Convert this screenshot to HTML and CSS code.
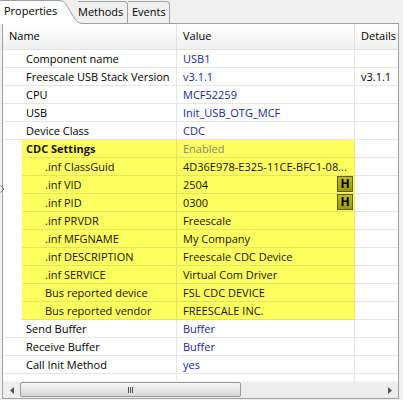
FILE: index.html
```html
<!DOCTYPE html>
<html lang="en">
<head>
    <meta charset="UTF-8">
    <title>Properties</title>
    <link rel="stylesheet" href="styles.css">
</head>
<body>
    <div class="tabs">
        <div class="tab active">Properties</div>
        <svg class="tab-curve" width="22" height="24" viewBox="0 0 22 24">
            <path d="M0 0.5 C9 0.5 12 23.5 22 23.5 L22 24 L0 24 Z" fill="#fff"/>
            <path d="M0 0.5 C9 0.5 12 23.5 22 23.5" fill="none" stroke="#a0a0a0" stroke-width="1"/>
        </svg>
        <div class="tab methods">Methods</div>
        <div class="tab events">Events</div>
    </div>

    <svg class="sash" width="5" height="8" viewBox="0 0 5 8">
        <path d="M0.5 0.5 L4 4 L0.5 7.5" fill="none" stroke="#7a7a7a" stroke-width="1"/>
    </svg>

    <div class="pane">
        <div class="row head">
            <div class="cell c-name">Name</div>
            <div class="cell c-val">Value</div>
            <div class="cell c-det">Details</div>
        </div>

        <div class="rows">
            <div class="row">
                <div class="cell c-name l1">Component name</div>
                <div class="cell c-val blue">USB1</div>
                <div class="cell c-det"></div>
            </div>
            <div class="row">
                <div class="cell c-name l1">Freescale USB Stack Version</div>
                <div class="cell c-val blue">v3.1.1</div>
                <div class="cell c-det">v3.1.1</div>
            </div>
            <div class="row">
                <div class="cell c-name l1">CPU</div>
                <div class="cell c-val blue">MCF52259</div>
                <div class="cell c-det"></div>
            </div>
            <div class="row">
                <div class="cell c-name l1">USB</div>
                <div class="cell c-val blue">Init_USB_OTG_MCF</div>
                <div class="cell c-det"></div>
            </div>
            <div class="row">
                <div class="cell c-name l1">Device Class</div>
                <div class="cell c-val blue">CDC</div>
                <div class="cell c-det"></div>
            </div>

            <div class="row hl">
                <div class="cell c-name"><span class="lbl l1 bold">CDC Settings</span></div>
                <div class="cell c-val grey">Enabled</div>
                <div class="cell c-det"></div>
            </div>
            <div class="row hl">
                <div class="cell c-name"><span class="lbl l2">.inf ClassGuid</span></div>
                <div class="cell c-val">4D36E978-E325-11CE-BFC1-08...</div>
                <div class="cell c-det"></div>
            </div>
            <div class="row hl">
                <div class="cell c-name"><span class="lbl l2">.inf VID</span></div>
                <div class="cell c-val"><span class="txt">2504</span><span class="hbtn">H</span></div>
                <div class="cell c-det"></div>
            </div>
            <div class="row hl">
                <div class="cell c-name"><span class="lbl l2">.inf PID</span></div>
                <div class="cell c-val"><span class="txt">0300</span><span class="hbtn">H</span></div>
                <div class="cell c-det"></div>
            </div>
            <div class="row hl">
                <div class="cell c-name"><span class="lbl l2">.inf PRVDR</span></div>
                <div class="cell c-val">Freescale</div>
                <div class="cell c-det"></div>
            </div>
            <div class="row hl">
                <div class="cell c-name"><span class="lbl l2">.inf MFGNAME</span></div>
                <div class="cell c-val">My Company</div>
                <div class="cell c-det"></div>
            </div>
            <div class="row hl">
                <div class="cell c-name"><span class="lbl l2">.inf DESCRIPTION</span></div>
                <div class="cell c-val">Freescale CDC Device</div>
                <div class="cell c-det"></div>
            </div>
            <div class="row hl">
                <div class="cell c-name"><span class="lbl l2">.inf SERVICE</span></div>
                <div class="cell c-val">Virtual Com Driver</div>
                <div class="cell c-det"></div>
            </div>
            <div class="row hl">
                <div class="cell c-name"><span class="lbl l2">Bus reported device</span></div>
                <div class="cell c-val">FSL CDC DEVICE</div>
                <div class="cell c-det"></div>
            </div>
            <div class="row hl">
                <div class="cell c-name"><span class="lbl l2">Bus reported vendor</span></div>
                <div class="cell c-val">FREESCALE INC.</div>
                <div class="cell c-det"></div>
            </div>

            <div class="row">
                <div class="cell c-name l1">Send Buffer</div>
                <div class="cell c-val blue">Buffer</div>
                <div class="cell c-det"></div>
            </div>
            <div class="row">
                <div class="cell c-name l1">Receive Buffer</div>
                <div class="cell c-val blue">Buffer</div>
                <div class="cell c-det"></div>
            </div>
            <div class="row">
                <div class="cell c-name l1">Call Init Method</div>
                <div class="cell c-val blue">yes</div>
                <div class="cell c-det"></div>
            </div>

            <div class="row filler">
                <div class="cell c-name"></div>
                <div class="cell c-val"></div>
                <div class="cell c-det"></div>
            </div>
        </div>

        <div class="hscroll">
            <div class="arrow">
                <svg width="4" height="7" viewBox="0 0 4 7"><path d="M4 0 L0 3.5 L4 7 Z" fill="#555"/></svg>
            </div>
            <div class="track">
                <div class="thumb">
                    <span class="grip"></span><span class="grip"></span><span class="grip"></span>
                </div>
            </div>
            <div class="arrow">
                <svg width="4" height="7" viewBox="0 0 4 7"><path d="M0 0 L4 3.5 L0 7 Z" fill="#555"/></svg>
            </div>
        </div>
    </div>
</body>
</html>
```

FILE: styles.css
```css
* {
    margin: 0;
    padding: 0;
    box-sizing: border-box;
}

body {
    width: 403px;
    height: 400px;
    overflow: hidden;
    position: relative;
    background: #f0f0f0;
    font-family: 'Open Sans', 'Liberation Sans', sans-serif;
    font-size: 11px;
    color: #000;
}

/* tab strip */

.tabs {
    display: flex;
    align-items: flex-end;
    height: 23px;
}

.tab {
    height: 22px;
    line-height: 20px;
    border: 1px solid #a0a0a0;
    border-bottom: none;
    border-top-right-radius: 4px;
    background: #f0f0f0;
    white-space: nowrap;
}

.tab.active {
    position: relative;
    z-index: 2;
    width: 60px;
    height: 24px;
    margin-bottom: -1px;
    padding-left: 4px;
    border-left: none;
    border-right: none;
    border-radius: 0;
    background: #fff;
}

.tab-curve {
    position: relative;
    z-index: 2;
    flex-shrink: 0;
    margin-bottom: -1px;
}

.tab.methods {
    width: 50px;
    margin-left: -4px;
    padding-left: 0;
    border-left: none;
}

.tab.events {
    width: 42px;
    padding-left: 4px;
    border-left: none;
}

.sash {
    position: absolute;
    left: 0;
    top: 185px;
    z-index: 3;
}

/* property table */

.pane {
    width: 397px;
    height: 376px;
    margin-left: 2px;
    border: 1px solid #a0a0a0;
    background: #fff;
    display: flex;
    flex-direction: column;
}

.rows {
    flex: 1;
    display: flex;
    flex-direction: column;
    overflow: hidden;
}

.row {
    display: flex;
    height: 18px;
    line-height: 17px;
    flex-shrink: 0;
}

.cell {
    height: 100%;
    white-space: nowrap;
    overflow: hidden;
    border-bottom: 1px solid #e6e6e6;
    border-right: 1px solid #e6e6e6;
}

.c-name {
    width: 174px;
    display: flex;
}

.c-val {
    width: 178px;
    padding-left: 6px;
    display: flex;
}

.c-det {
    width: 43px;
    padding-left: 6px;
    border-right: none;
}

.head {
    height: 26px;
    line-height: 24px;
    background: linear-gradient(#ffffff, #f1f1f1);
}

.head .cell {
    border-bottom: 1px solid #e2e2e2;
    border-right-color: #e2e2e2;
}

.head .c-name {
    padding-left: 6px;
}

.l1 {
    padding-left: 23px;
}

.blue {
    color: #1c1ca8;
}

.grey {
    color: #8a8a80;
}

.bold {
    font-weight: bold;
}

/* highlighted group */

.hl .c-name {
    padding-left: 19px;
    border-bottom: none;
    border-right: none;
}

.lbl {
    flex: 1;
    height: 18px;
    background: #ffff60;
    color: #1a1200;
    border-bottom: 1px solid #e4e45c;
    border-right: 1px solid #e4e45c;
}

.lbl.l1 {
    padding-left: 4px;
}

.lbl.l2 {
    padding-left: 23px;
}

.hl .c-val {
    background: #ffff60;
    color: #1a1200;
    border-bottom-color: #e4e45c;
    border-right-color: #f0f070;
}

.hl .c-val.grey {
    color: #8a8a70;
}

.txt {
    flex: 1;
}

.hbtn {
    width: 16px;
    height: 16px;
    margin-right: 1px;
    border: 1px solid #5e5e00;
    background: linear-gradient(#bcbc30, #9a9a08);
    color: #000;
    font-weight: bold;
    font-size: 12px;
    line-height: 14px;
    text-align: center;
}

.filler {
    flex: 1;
}

.filler .cell {
    border-bottom: none;
}

/* horizontal scrollbar */

.hscroll {
    display: flex;
    height: 17px;
    background: #ededed;
    border-top: 1px solid #f4f4f4;
}

.arrow {
    width: 17px;
    display: flex;
    align-items: center;
    justify-content: center;
}

.track {
    flex: 1;
    padding: 0 1px 1px 0;
}

.thumb {
    width: 221px;
    height: 15px;
    border: 1px solid #979797;
    border-radius: 2px;
    background: linear-gradient(#f6f6f6, #e2e2e2 60%, #d8d8d8);
    display: flex;
    justify-content: center;
    align-items: center;
    gap: 1px;
}

.grip {
    width: 1px;
    height: 6px;
    background: #555;
}
```
